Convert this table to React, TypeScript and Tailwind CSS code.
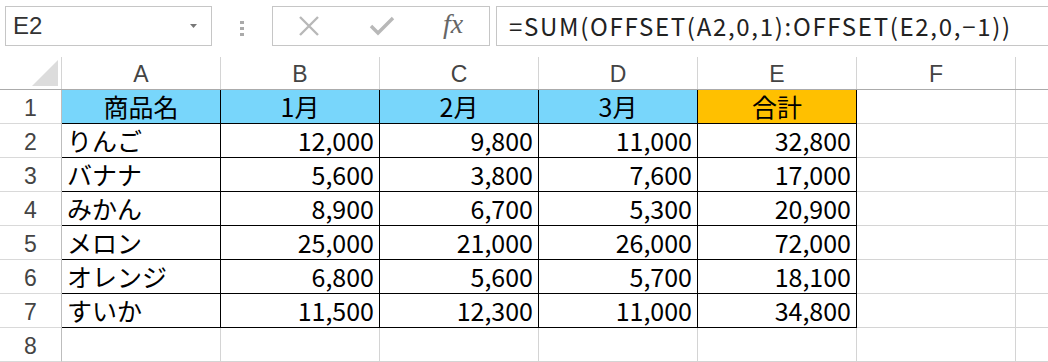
import React from "react";

const COLS = ["A", "B", "C", "D", "E", "F"];

type Row = { name: string; vals: string[] };

const ROWS: Row[] = [
  { name: "りんご", vals: ["12,000", "9,800", "11,000", "32,800"] },
  { name: "バナナ", vals: ["5,600", "3,800", "7,600", "17,000"] },
  { name: "みかん", vals: ["8,900", "6,700", "5,300", "20,900"] },
  { name: "メロン", vals: ["25,000", "21,000", "26,000", "72,000"] },
  { name: "オレンジ", vals: ["6,800", "5,600", "5,700", "18,100"] },
  { name: "すいか", vals: ["11,500", "12,300", "11,000", "34,800"] },
];

const jp = "font-['Noto_Sans_CJK_JP',sans-serif]";
const ui = "font-['Liberation_Sans',Arial,sans-serif]";

function RowHead({ n }: { n: number }) {
  return (
    <div
      className={`${ui} flex items-end justify-center pb-[3px] text-[23px] text-[#444] leading-none border-r border-r-[#bdbdbd] border-b border-b-[#d9d9d9]`}
    >
      {n}
    </div>
  );
}

function Grid({ last = false }: { last?: boolean }) {
  return (
    <div
      className={`border-b border-b-[#d4d4d4] ${last ? "" : "border-r border-r-[#d4d4d4]"}`}
    />
  );
}

export default function App() {
  return (
    <div className="w-[1048px] h-[362px] bg-white overflow-hidden">
      {/* name box + formula bar */}
      <div className="flex h-[52px] pt-[6px]">
        <div className="ml-[5px] w-[207px] h-[40px] border border-[#c6c6c6] flex items-center justify-between pl-[7px] pr-[14px]">
          <span className={`${ui} text-[24px] text-[#333] leading-none`}>E2</span>
          <svg width="7" height="4" viewBox="0 0 7 4">
            <path d="M0 0 H7 L3.5 4 Z" fill="#777" />
          </svg>
        </div>
        <div className="w-[60px] flex flex-col items-center justify-center gap-[3px] pb-[2px]">
          <div className="w-[4px] h-[3px] bg-[#aaa]" />
          <div className="w-[4px] h-[3px] bg-[#aaa]" />
          <div className="w-[4px] h-[3px] bg-[#aaa]" />
        </div>
        <div className="w-[218px] h-[40px] border border-[#c6c6c6] flex items-center">
          <svg width="22" height="22" viewBox="0 0 22 22" className="ml-[25px]">
            <path d="M2 2 L20 20 M20 2 L2 20" stroke="#b8b8b8" strokeWidth="2.4" />
          </svg>
          <svg width="26" height="22" viewBox="0 0 26 22" className="ml-[49px]">
            <path d="M2 11 L9 18 L24 3" stroke="#b8b8b8" strokeWidth="3.4" fill="none" />
          </svg>
          <span className="ml-[48px] font-['Liberation_Serif',serif] italic text-[28px] text-[#666] leading-none -mt-[4px]">
            fx
          </span>
        </div>
        <div className="ml-[6px] flex-1 h-[40px] border-y border-l border-[#c6c6c6] flex items-center pl-[12px]">
          <span className={`${jp} text-[24px] tracking-[1.7px] text-[#222] leading-none whitespace-nowrap`}>
            =SUM(OFFSET(A2,0,1):OFFSET(E2,0,−1))
          </span>
        </div>
      </div>

      {/* column headers */}
      <div className="grid grid-cols-[62px_159px_159px_159px_159px_159px_159px_1fr] h-[38px] border-b border-b-[#ababab]">
        <div className="pt-[5px] flex">
          <div className="flex-1 flex items-end justify-end pr-[3px] pb-[3px] border-r border-r-[#d4d4d4]">
            <svg width="26" height="26" viewBox="0 0 26 26">
              <path d="M26 0 V26 H0 Z" fill="#dcdcdc" />
            </svg>
          </div>
        </div>
        {COLS.map((c) => (
          <div key={c} className="pt-[5px] flex">
            <div
              className={`${ui} flex-1 flex items-end justify-center pb-[3px] text-[23px] text-[#444] leading-none border-r border-r-[#d4d4d4]`}
            >
              {c}
            </div>
          </div>
        ))}
        <div className="pt-[5px] flex">
          <div className="flex-1" />
        </div>
      </div>

      {/* sheet body */}
      <div className={`grid grid-cols-[62px_159px_159px_159px_159px_159px_159px_1fr] grid-rows-[repeat(8,34px)] ${jp} text-[25px] text-black leading-none`}>
        {/* row 1: headings */}
        <RowHead n={1} />
        {["商品名", "1月", "2月", "3月"].map((h) => (
          <div
            key={h}
            className="bg-[#78d6fb] border-r border-b border-black flex items-end justify-center pb-[4px]"
          >
            {h}
          </div>
        ))}
        <div className="bg-[#ffc000] border-r border-b border-black flex items-end justify-center pb-[4px]">
          合計
        </div>
        <Grid />
        <Grid last />

        {ROWS.map((r, i) => (
          <React.Fragment key={r.name}>
            <RowHead n={i + 2} />
            <div className="border-r border-b border-black flex items-end pl-[5px] pb-[4px]">
              {r.name}
            </div>
            {r.vals.map((v, j) => (
              <div
                key={j}
                className="border-r border-b border-black flex items-end justify-end pr-[5px] pb-[4px]"
              >
                {v}
              </div>
            ))}
            <Grid />
            <Grid last />
          </React.Fragment>
        ))}

        <RowHead n={8} />
        {COLS.map((c) => (
          <Grid key={c} />
        ))}
        <Grid last />
      </div>
    </div>
  );
}
